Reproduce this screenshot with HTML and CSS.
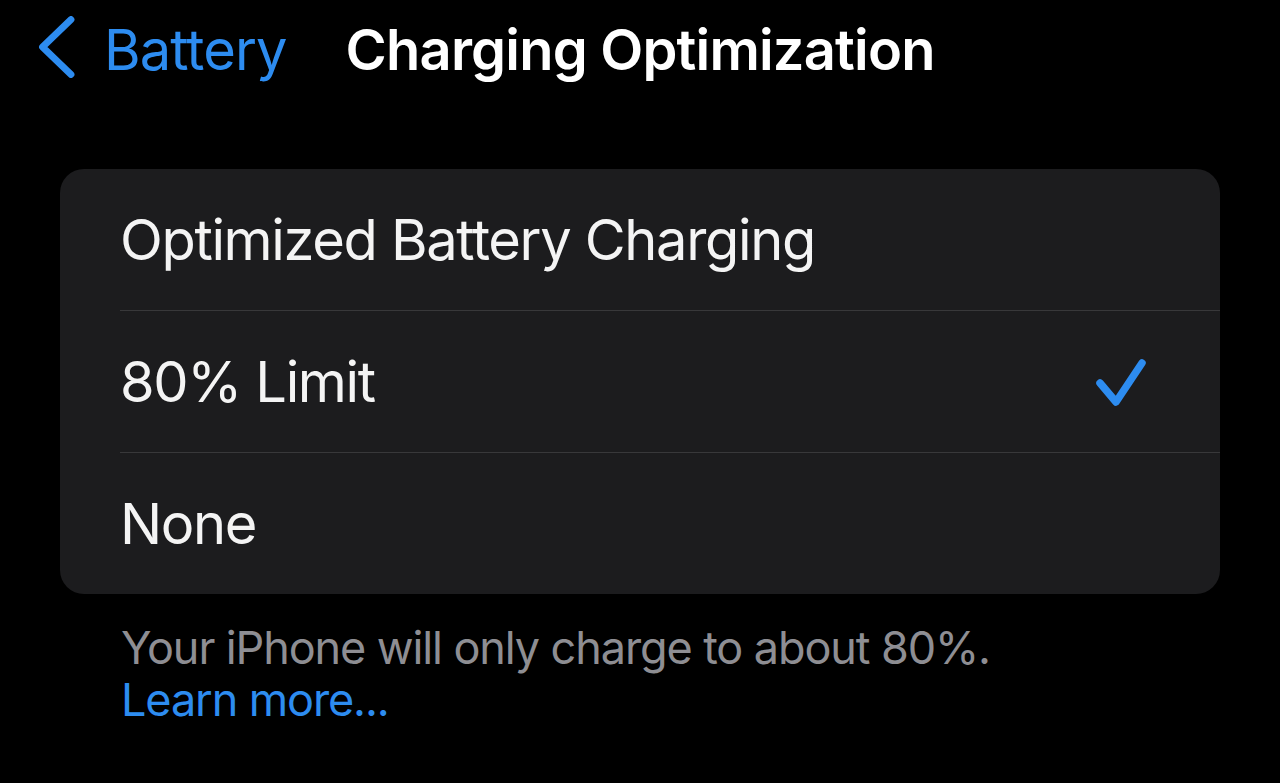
FILE: index.html
```html
<!DOCTYPE html>
<html lang="en">
<head>
<meta charset="utf-8">
<title>Charging Optimization</title>
<link rel="stylesheet" href="styles.css">
</head>
<body>
<div class="screen">
  <header class="nav">
    <a class="back" href="#">
      <svg class="chevron" viewBox="0 0 38 62" width="38" height="62" aria-hidden="true">
        <path d="M34 3.5 L5.5 31 L34 58.5" fill="none" stroke="#2d8cf0" stroke-width="6.8" stroke-linecap="round" stroke-linejoin="round"/>
      </svg>
      <span class="back-label">Battery</span>
    </a>
    <h1 class="title">Charging Optimization</h1>
  </header>

  <section class="group">
    <div class="row"><span class="row-label">Optimized Battery Charging</span></div>
    <div class="row"><span class="row-label">80% Limit</span>
      <svg class="check" viewBox="0 0 52 52" width="52" height="52" aria-hidden="true">
        <path d="M4 27 L20 46 L46 7" fill="none" stroke="#2d8cf0" stroke-width="7.5" stroke-linecap="round" stroke-linejoin="round"/>
      </svg>
    </div>
    <div class="row"><span class="row-label">None</span></div>
  </section>

  <p class="footer">Your iPhone will only charge to about 80%.<br><a class="learn" href="#">Learn more...</a></p>
</div>
</body>
</html>
```
FILE: styles.css
```css
html, body {
  margin: 0;
  padding: 0;
  background: #000;
}
body {
  font-family: Inter, "Noto Sans", "Liberation Sans", sans-serif;
  color: #fff;
  width: 1280px;
  height: 783px;
  overflow: hidden;
}
.screen {
  display: flex;
  flex-direction: column;
}
.nav {
  display: flex;
  align-items: center;
  height: 100px;
  padding-left: 37px;
}
.back {
  display: flex;
  align-items: center;
  text-decoration: none;
  color: #2d8cf0;
}
.chevron {
  display: block;
  margin-top: -6px;
}
.back-label {
  margin-left: 29px;
  font-size: 56px;
  font-weight: 400;
  letter-spacing: -0.9px;
}
.title {
  margin: 0 0 0 59px;
  font-size: 56px;
  font-weight: 600;
  letter-spacing: -0.8px;
  color: #fff;
}
.group {
  margin: 69px 60px 0 60px;
  background: #1c1c1e;
  border-radius: 24px;
  overflow: hidden;
}
.row {
  display: flex;
  align-items: center;
  justify-content: space-between;
  height: 141px;
  margin-left: 60px;
  padding-right: 72px;
  border-bottom: 1px solid #38383a;
}
.row:last-child {
  border-bottom: none;
}
.row-label {
  font-size: 56px;
  letter-spacing: -1.35px;
  color: #f4f4f4;
}
.check {
  display: block;
}
.footer {
  margin: 28px 0 0 121px;
  font-size: 45px;
  line-height: 52px;
  color: #8e8e93;
  letter-spacing: -1.1px;
}
.learn {
  color: #2d8cf0;
  text-decoration: none;
}
```
